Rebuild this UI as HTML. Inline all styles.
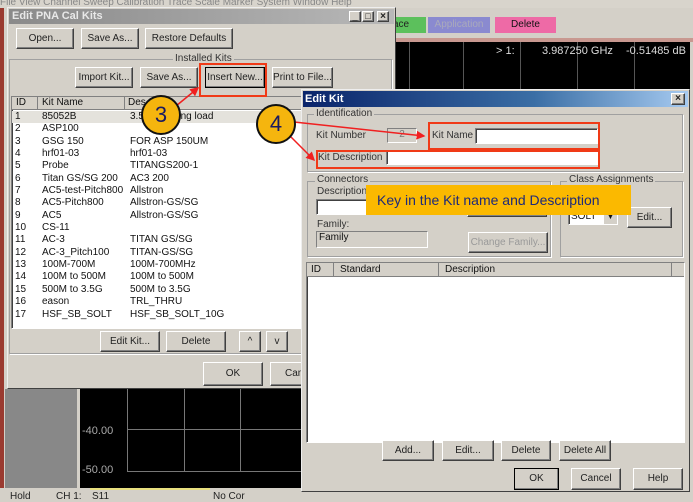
<!DOCTYPE html>
<html><head><style>
*{box-sizing:border-box;margin:0;padding:0}
body{width:693px;height:502px;overflow:hidden;background:#d4d0c8;font-family:"Liberation Sans",sans-serif;font-size:10px;color:#111;position:relative}
.a{position:absolute}
.btn{position:absolute;background:#d4d0c8;border:1px solid;border-color:#fff #404040 #404040 #fff;box-shadow:inset -1px -1px 0 #808080;text-align:center;font-size:10px;color:#222}
.grp{position:absolute;border:1px solid #a0a0a0;box-shadow:1px 1px 0 #fff}
.lbl{position:absolute;background:#d4d0c8;padding:0 2px;font-size:10px;color:#333}
.in{position:absolute;background:#fff;border:1px solid;border-color:#808080 #fff #fff #808080;box-shadow:inset 1px 1px 0 #404040}
.row{height:12.35px;line-height:12.35px;white-space:nowrap;position:relative}
.row span{position:absolute}
.red{position:absolute;border:2px solid #f03a17}
.circ{position:absolute;width:40px;height:40px;border-radius:50%;background:#f5b50e;border:2px solid #111;font-size:22px;text-align:center;line-height:36px;color:#1a1a60}
</style></head><body>
<!-- menu bar -->
<div class="a" style="left:0;top:0;width:693px;height:8px;background:#d8d4cc;color:#888;font-size:10px;line-height:6px;overflow:hidden;white-space:nowrap">File View Channel Sweep Calibration Trace Scale Marker System Window Help</div>
<div class="a" style="left:0;top:8px;width:4px;height:480px;background:#9a3a30"></div>
<!-- toolbar right -->
<div class="a" style="left:393px;top:14px;width:300px;height:24px;background:#d4d0c8"></div>
<div class="a" style="left:393px;top:17px;width:33px;height:16px;background:#5cc05c;font-size:10px;line-height:16px;color:#222">ace</div>
<div class="a" style="left:428px;top:17px;width:62px;height:16px;background:#8a8ad0;color:#aab;text-align:center;line-height:16px">Application</div>
<div class="a" style="left:495px;top:17px;width:61px;height:16px;background:#ee6aa6;text-align:center;line-height:16px">Delete</div>
<div class="a" style="left:393px;top:38px;width:300px;height:4px;background:#c89890"></div>
<!-- black display top -->
<div class="a" style="left:396px;top:42px;width:294px;height:48px;background:#000;color:#ddd;font-size:11px">
<div class="a" style="left:13px;top:0;width:1px;height:48px;background:#555"></div>
<div class="a" style="left:67px;top:0;width:1px;height:48px;background:#555"></div>
<div class="a" style="left:124px;top:0;width:1px;height:48px;background:#555"></div>
<div class="a" style="left:181px;top:0;width:1px;height:48px;background:#555"></div>
<div class="a" style="left:238px;top:0;width:1px;height:48px;background:#555"></div>
<div class="a" style="left:100px;top:3px">&gt; 1:</div>
<div class="a" style="left:146px;top:3px">3.987250 GHz</div>
<div class="a" style="left:230px;top:3px">-0.51485 dB</div>
</div>
<!-- bottom-left display -->
<div class="a" style="left:5px;top:389px;width:72px;height:99px;background:#888"></div>
<div class="a" style="left:80px;top:389px;width:222px;height:99px;background:#000;color:#aaa;font-size:11px">
<div class="a" style="left:47px;top:0;width:1px;height:82px;background:#777"></div>
<div class="a" style="left:104px;top:0;width:1px;height:82px;background:#777"></div>
<div class="a" style="left:160px;top:0;width:1px;height:82px;background:#777"></div>
<div class="a" style="left:47px;top:40px;width:175px;height:1px;background:#777"></div>
<div class="a" style="left:47px;top:82px;width:175px;height:1px;background:#777"></div>
<div class="a" style="left:2px;top:36px">-40.00</div>
<div class="a" style="left:2px;top:75px">-50.00</div>
</div>
<!-- status bar -->
<div class="a" style="left:0;top:488px;width:693px;height:14px;background:#d4d0c8;font-size:10px;color:#222">
<span class="a" style="left:10px;top:3px">Hold</span><span class="a" style="left:56px;top:3px">CH 1:</span>
<div class="a" style="left:90px;top:0;width:120px;height:2px;background:#e8e080"></div>
<span class="a" style="left:92px;top:3px">S11</span><span class="a" style="left:213px;top:3px">No Cor</span></div>

<!-- Edit PNA Cal Kits dialog -->
<div class="a" style="left:7px;top:7px;width:389px;height:382px;background:#d4d0c8;border:1px solid;border-color:#eee #404040 #404040 #eee">
<div class="a" style="left:1px;top:1px;width:385px;height:15px;background:linear-gradient(90deg,#8a8a8a,#b8b8b8);color:#e8e8e8;font-weight:bold;font-size:11px;line-height:15px;padding-left:3px">Edit PNA Cal Kits</div>
<div class="btn" style="left:341px;top:3px;width:12px;height:11px;line-height:9px;font-size:9px">_</div>
<div class="btn" style="left:354px;top:3px;width:12px;height:11px;line-height:9px;font-size:9px">□</div>
<div class="btn" style="left:369px;top:3px;width:12px;height:11px;line-height:9px;font-size:10px;font-weight:bold">×</div>
<div class="btn" style="left:8px;top:20px;width:58px;height:21px;line-height:19px">Open...</div>
<div class="btn" style="left:73px;top:20px;width:58px;height:21px;line-height:19px">Save As...</div>
<div class="btn" style="left:137px;top:20px;width:88px;height:21px;line-height:19px">Restore Defaults</div>
<div class="grp" style="left:1px;top:51px;width:383px;height:295px"></div>
<div class="lbl" style="left:165px;top:45px">Installed Kits</div>
<div class="btn" style="left:67px;top:59px;width:58px;height:21px;line-height:19px">Import Kit...</div>
<div class="btn" style="left:132px;top:59px;width:58px;height:21px;line-height:19px">Save As...</div>
<div class="btn" style="left:197px;top:59px;width:60px;height:21px;line-height:19px;border-color:#000">Insert New...</div>
<div class="btn" style="left:264px;top:59px;width:61px;height:21px;line-height:19px">Print to File...</div>
<div class="in" style="left:3px;top:88px;width:296px;height:233px;overflow:hidden">
<div style="height:13px;background:#d4d0c8;border-bottom:1px solid #808080;position:relative;font-size:10px;line-height:12px">
<span class="a" style="left:4px">ID</span><span class="a" style="left:30px">Kit Name</span><span class="a" style="left:116px">Des</span>
<div class="a" style="left:25px;top:0;width:1px;height:12px;background:#808080"></div><div class="a" style="left:112px;top:0;width:1px;height:12px;background:#808080"></div></div>
<div style="padding-top:1px">
<div class="row" style="background:#e4e2dc"><span style="left:3px">1</span><span style="left:30px">85052B</span><span style="left:118px">3.5mm sliding load</span></div>
<div class="row"><span style="left:3px">2</span><span style="left:30px">ASP100</span></div>
<div class="row"><span style="left:3px">3</span><span style="left:30px">GSG 150</span><span style="left:118px">FOR ASP 150UM</span></div>
<div class="row"><span style="left:3px">4</span><span style="left:30px">hrf01-03</span><span style="left:118px">hrf01-03</span></div>
<div class="row"><span style="left:3px">5</span><span style="left:30px">Probe</span><span style="left:118px">TITANGS200-1</span></div>
<div class="row"><span style="left:3px">6</span><span style="left:30px">Titan GS/SG 200</span><span style="left:118px">AC3 200</span></div>
<div class="row"><span style="left:3px">7</span><span style="left:30px">AC5-test-Pitch800</span><span style="left:118px">Allstron</span></div>
<div class="row"><span style="left:3px">8</span><span style="left:30px">AC5-Pitch800</span><span style="left:118px">Allstron-GS/SG</span></div>
<div class="row"><span style="left:3px">9</span><span style="left:30px">AC5</span><span style="left:118px">Allstron-GS/SG</span></div>
<div class="row"><span style="left:3px">10</span><span style="left:30px">CS-11</span></div>
<div class="row"><span style="left:3px">11</span><span style="left:30px">AC-3</span><span style="left:118px">TITAN GS/SG</span></div>
<div class="row"><span style="left:3px">12</span><span style="left:30px">AC-3_Pitch100</span><span style="left:118px">TITAN-GS/SG</span></div>
<div class="row"><span style="left:3px">13</span><span style="left:30px">100M-700M</span><span style="left:118px">100M-700MHz</span></div>
<div class="row"><span style="left:3px">14</span><span style="left:30px">100M to 500M</span><span style="left:118px">100M to 500M</span></div>
<div class="row"><span style="left:3px">15</span><span style="left:30px">500M to 3.5G</span><span style="left:118px">500M to 3.5G</span></div>
<div class="row"><span style="left:3px">16</span><span style="left:30px">eason</span><span style="left:118px">TRL_THRU</span></div>
<div class="row"><span style="left:3px">17</span><span style="left:30px">HSF_SB_SOLT</span><span style="left:118px">HSF_SB_SOLT_10G</span></div>
</div></div>
<div class="btn" style="left:92px;top:323px;width:60px;height:21px;line-height:19px">Edit Kit...</div>
<div class="btn" style="left:158px;top:323px;width:60px;height:21px;line-height:19px">Delete</div>
<div class="btn" style="left:231px;top:323px;width:22px;height:21px;line-height:19px">^</div>
<div class="btn" style="left:258px;top:323px;width:22px;height:21px;line-height:19px">v</div>
<div class="btn" style="left:195px;top:354px;width:60px;height:24px;line-height:22px">OK</div>
<div class="btn" style="left:262px;top:354px;width:60px;height:24px;line-height:22px;text-align:left;padding-left:14px">Cancel</div>
</div>
<div class="red" style="left:199px;top:63px;width:68px;height:34px"></div>

<!-- Edit Kit dialog -->
<div class="a" style="left:301px;top:89px;width:389px;height:403px;background:#d4d0c8;border:1px solid;border-color:#eee #404040 #404040 #eee">
<div class="a" style="left:1px;top:1px;width:385px;height:16px;background:linear-gradient(90deg,#0a246a,#3a6ea5 60%,#a6caf0);color:#fff;font-weight:bold;font-size:11px;line-height:16px;padding-left:2px">Edit Kit</div>
<div class="btn" style="left:369px;top:3px;width:14px;height:12px;line-height:10px;font-weight:bold">×</div>
<div class="grp" style="left:5px;top:24px;width:376px;height:58px"></div>
<div class="lbl" style="left:12px;top:18px">Identification</div>
<div class="a" style="left:14px;top:40px;color:#333">Kit Number</div>
<div class="in" style="left:85px;top:38px;width:30px;height:15px;background:#d4d0c8;box-shadow:none;text-align:center;color:#777">2</div>
<div class="a" style="left:130px;top:40px;color:#333">Kit Name</div>
<div class="in" style="left:173px;top:38px;width:123px;height:16px"></div>
<div class="a" style="left:16px;top:62px;color:#333">Kit Description</div>
<div class="in" style="left:84px;top:60px;width:212px;height:15px"></div>
<div class="grp" style="left:5px;top:91px;width:244px;height:76px"></div>
<div class="lbl" style="left:13px;top:84px">Connectors</div>
<div class="a" style="left:15px;top:96px;color:#333">Description:</div>
<div class="in" style="left:14px;top:109px;width:145px;height:16px"></div>
<div class="btn" style="left:165px;top:107px;width:80px;height:20px"></div>
<div class="a" style="left:15px;top:129px;color:#333">Family:</div>
<div class="in" style="left:14px;top:141px;width:112px;height:17px;background:#d4d0c8;box-shadow:none;padding-left:2px">Family</div>
<div class="btn" style="left:166px;top:142px;width:80px;height:21px;line-height:19px;color:#999">Change Family...</div>
<div class="grp" style="left:258px;top:91px;width:123px;height:76px"></div>
<div class="lbl" style="left:265px;top:84px">Class Assignments</div>
<div class="in" style="left:266px;top:119px;width:50px;height:16px;padding-left:2px;line-height:14px">SOLT<span class="a" style="right:0;top:0;width:13px;height:14px;background:#d4d0c8;text-align:center;font-size:8px">▼</span></div>
<div class="btn" style="left:325px;top:117px;width:45px;height:21px;line-height:19px">Edit...</div>
<div class="in" style="left:4px;top:172px;width:379px;height:181px">
<div style="height:14px;background:#d4d0c8;border-bottom:1px solid #808080;position:relative;line-height:13px">
<span class="a" style="left:4px">ID</span><span class="a" style="left:33px">Standard</span><span class="a" style="left:138px">Description</span>
<div class="a" style="left:26px;top:0;width:1px;height:13px;background:#808080"></div>
<div class="a" style="left:131px;top:0;width:1px;height:13px;background:#808080"></div>
<div class="a" style="left:364px;top:0;width:1px;height:13px;background:#808080"></div></div></div>
<div class="btn" style="left:80px;top:350px;width:52px;height:21px;line-height:19px">Add...</div>
<div class="btn" style="left:140px;top:350px;width:52px;height:21px;line-height:19px">Edit...</div>
<div class="btn" style="left:199px;top:350px;width:50px;height:21px;line-height:19px">Delete</div>
<div class="btn" style="left:257px;top:350px;width:52px;height:21px;line-height:19px">Delete All</div>
<div class="btn" style="left:212px;top:378px;width:45px;height:22px;line-height:20px;border-color:#000">OK</div>
<div class="btn" style="left:269px;top:378px;width:50px;height:22px;line-height:20px">Cancel</div>
<div class="btn" style="left:331px;top:378px;width:50px;height:22px;line-height:20px">Help</div>
</div>
<div class="red" style="left:428px;top:122px;width:172px;height:28px"></div>
<div class="red" style="left:316px;top:150px;width:284px;height:19px"></div>
<!-- yellow callout -->
<div class="a" style="left:366px;top:185px;width:265px;height:30px;background:#fbb900;color:#1e2a7a;font-size:14px;line-height:30px;padding-left:11px">Key in the Kit name and Description</div>
<!-- arrows -->
<svg class="a" style="left:0;top:0" width="693" height="502">
<defs><marker id="ah" markerWidth="6" markerHeight="6" refX="5" refY="3" orient="auto"><path d="M0,0L6,3L0,6z" fill="#f02020"/></marker></defs>
<line x1="176" y1="106" x2="198" y2="88" stroke="#f02020" stroke-width="1.5" marker-end="url(#ah)"/>
<line x1="294" y1="122" x2="424" y2="136" stroke="#f02020" stroke-width="1.5" marker-end="url(#ah)"/>
<line x1="289" y1="135" x2="314" y2="160" stroke="#f02020" stroke-width="1.5" marker-end="url(#ah)"/>
</svg>
<div class="circ" style="left:141px;top:95px">3</div>
<div class="circ" style="left:256px;top:104px">4</div>
</body></html>
